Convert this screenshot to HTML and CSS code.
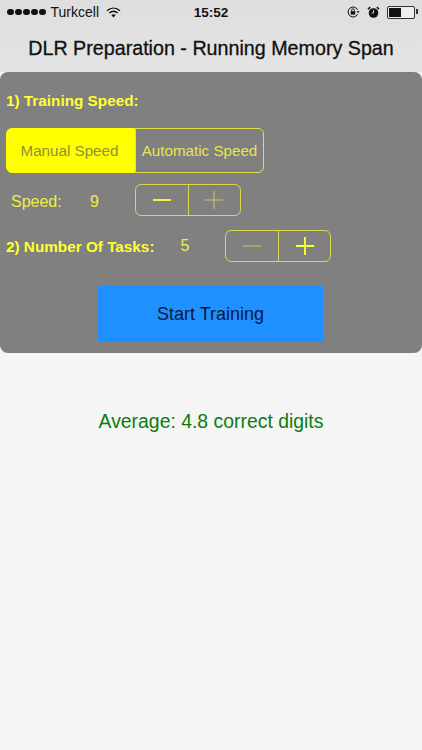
FILE: index.html
```html
<!DOCTYPE html>
<html lang="en">
<head>
    <meta charset="UTF-8">
    <meta name="viewport" content="width=device-width, initial-scale=1.0">
    <title>DLR Preparation</title>
    <link rel="stylesheet" href="styles.css">
</head>
<body>

<div class="top">
    <div class="status">
        <div class="status-left">
            <span class="dots"><i></i><i></i><i></i><i></i><i></i></span>
            <span class="carrier">Turkcell</span>
            <svg class="wifi" width="15" height="11" viewBox="0 0 15 11">
                <path d="M1 3.8C5 0.2 10 0.2 14 3.8" fill="none" stroke="#111" stroke-width="1.4"/>
                <path d="M3.3 6C5.8 3.8 9.2 3.8 11.7 6" fill="none" stroke="#111" stroke-width="1.4"/>
                <path d="M5.3 8C6.6 6.9 8.4 6.9 9.7 8L7.5 10.5Z" fill="#111"/>
            </svg>
        </div>
        <div class="time">15:52</div>
        <div class="status-right">
            <svg class="lock" width="13" height="12" viewBox="0 0 13 12">
                <path d="M10.6 8.2A5 5 0 1 1 10.6 3.8" fill="none" stroke="#111" stroke-width="1"/>
                <path d="M9.6 5.2H12.6L11.1 7.2Z" fill="#111"/>
                <rect x="3.7" y="5.2" width="4.6" height="3.4" fill="#111"/>
                <path d="M4.6 5.2V4.2A1.4 1.4 0 0 1 7.4 4.2V5.2" fill="none" stroke="#111" stroke-width="0.9"/>
            </svg>
            <svg class="alarm" width="13" height="13" viewBox="0 0 13 13">
                <circle cx="6.5" cy="7" r="4.8" fill="#111"/>
                <path d="M1 3.2L3.2 1.2M12 3.2L9.8 1.2" stroke="#111" stroke-width="1.6"/>
                <path d="M6.5 4V7H4.6" fill="none" stroke="#ddd" stroke-width="0.9"/>
            </svg>
            <div class="battery"><div class="battery-level" style="width: 50%"></div></div>
        </div>
    </div>
    <h1 class="title">DLR Preparation - Running Memory Span</h1>
</div>

<div class="panel">
    <div class="heading heading-first">1) Training Speed:</div>

    <div class="segments">
        <div class="segment active">Manual Speed</div>
        <div class="segment">Automatic Speed</div>
    </div>

    <div class="row row-speed">
        <span class="label">Speed:</span>
        <span class="value">9</span>
        <div class="stepper">
            <div class="step">
                <svg width="20" height="20" viewBox="0 0 20 20"><path d="M1 10H19" stroke="#ffff33" stroke-width="1.8"/></svg>
            </div>
            <div class="step dim">
                <svg width="20" height="20" viewBox="0 0 20 20"><path d="M1 10H19M10 1V19" stroke="#ffff33" stroke-width="1.5"/></svg>
            </div>
        </div>
    </div>

    <div class="row row-tasks">
        <span class="heading">2) Number Of Tasks:</span>
        <span class="value">5</span>
        <div class="stepper">
            <div class="step dim">
                <svg width="20" height="20" viewBox="0 0 20 20"><path d="M1 10H19" stroke="#ffff33" stroke-width="1.5"/></svg>
            </div>
            <div class="step">
                <svg width="20" height="20" viewBox="0 0 20 20"><path d="M1 10H19M10 1V19" stroke="#ffff33" stroke-width="1.8"/></svg>
            </div>
        </div>
    </div>

    <div class="start">Start Training</div>
</div>

<div class="average">Average: 4.8 correct digits</div>

</body>
</html>
```

FILE: styles.css
```css
body {
    font-family: "Liberation Sans", Arial, sans-serif;
    margin: 0;
    height: 750px;
    overflow: hidden;
    background-color: #f5f5f5;
}
.top {
    height: 72px;
    background: linear-gradient(#dedede, #e4e4e4);
    color: #111;
}
.status {
    height: 24px;
    padding: 0 7px;
    display: flex;
    align-items: center;
    justify-content: space-between;
    font-size: 14px;
}
.status-left, .status-right {
    width: 140px;
    display: flex;
    align-items: center;
}
.status-right {
    justify-content: flex-end;
    gap: 7px;
}
.dots {
    display: flex;
    gap: 1.5px;
    margin-right: 5px;
}
.dots i {
    width: 6.5px;
    height: 6.5px;
    border-radius: 50%;
    background-color: #111;
}
.wifi {
    margin-left: 7px;
}
.time {
    font-weight: bold;
    font-size: 13.5px;
}
.battery {
    width: 24px;
    height: 9px;
    padding: 1px;
    border: 1px solid #333;
    border-radius: 2px;
    background-color: #eee;
    position: relative;
}
.battery::after {
    content: "";
    position: absolute;
    right: -4px;
    top: 2px;
    width: 2px;
    height: 5px;
    background-color: #333;
}
.battery-level {
    height: 100%;
    background-color: #111;
}
.title {
    margin: 0;
    padding-top: 13px;
    font-size: 19.7px;
    font-weight: normal;
    text-align: center;
    -webkit-text-stroke: 0.3px #111;
}
.panel {
    height: 281px;
    box-sizing: border-box;
    background-color: #808080;
    border-radius: 8px;
    padding: 20px 6px 0;
    color: #eeee44;
    font-size: 16px;
}
.heading {
    font-weight: bold;
    font-size: 15.3px;
    line-height: 17px;
    color: #ffff33;
}
.segments {
    display: flex;
    width: 258px;
    height: 45px;
    margin-top: 19px;
}
.segment {
    display: flex;
    align-items: center;
    justify-content: center;
    box-sizing: border-box;
    font-size: 15.2px;
    color: #e6e64e;
    border: 1.5px solid #e0e04a;
}
.segment:first-child {
    width: 129px;
    border-radius: 6px 0 0 6px;
}
.segment:last-child {
    flex: 1;
    border-left-width: 1px;
    border-radius: 0 6px 6px 0;
}
.segment.active {
    background-color: #ffff00;
    border-color: #ffff00;
    color: #8f8f3a;
    padding-right: 2px;
}
.row {
    display: flex;
    align-items: center;
}
.row-speed {
    margin-top: 11px;
    padding-left: 5px;
}
.row-tasks {
    margin-top: 14px;
}
.label, .row-speed .value {
    padding-top: 3px;
}
.label {
    width: 79px;
}
.row-speed .value {
    width: 45px;
}
.row-tasks .value {
    width: 45px;
    margin-left: 26px;
}
.stepper {
    display: flex;
    width: 106px;
    height: 32px;
    box-sizing: border-box;
    border: 1.5px solid #d8d84a;
    border-radius: 6px;
}
.step {
    flex: 1;
    display: flex;
    align-items: center;
    justify-content: center;
}
.step:first-child {
    border-right: 1.5px solid #d8d84a;
}
.step.dim svg {
    opacity: 0.4;
}
.start {
    width: 225px;
    height: 56px;
    margin: 24px 0 0 92px;
    display: flex;
    align-items: center;
    justify-content: center;
    background-color: #1e90ff;
    color: #0a1a3a;
    font-size: 18px;
}
.average {
    margin-top: 57px;
    text-align: center;
    color: #0a7d0a;
    font-size: 19.4px;
}
```
